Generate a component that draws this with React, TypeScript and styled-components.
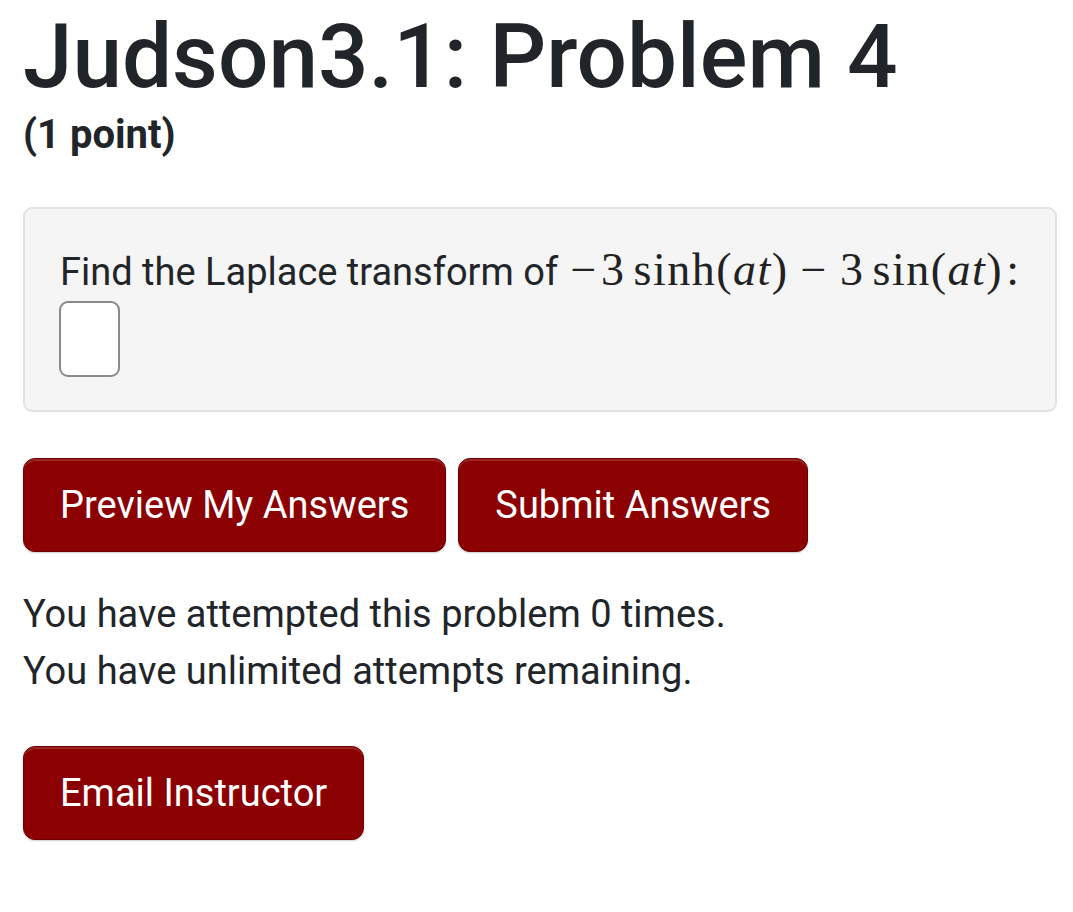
import styled, { createGlobalStyle } from 'styled-components';

const GlobalStyle = createGlobalStyle`
  html, body {
    margin: 0;
    padding: 0;
    background: #ffffff;
  }

  body {
    font-family: Roboto, "Liberation Sans", Arial, sans-serif;
    color: #212529;
  }
`;

const Page = styled.div`
  padding: 4px 16px 40px 23px;
`;

const Title = styled.h1`
  margin: 0;
  font-size: 89px;
  font-weight: 500;
  line-height: 1.2;
  color: #212529;
`;

const Points = styled.div`
  margin: 0 0 48px;
  font-size: 40px;
  font-weight: 700;
  line-height: 1.2;
`;

const ProblemPanel = styled.div`
  background: #f5f5f5;
  border: 2px solid #e2e2e2;
  border-radius: 9px;
  padding: 32px 35px 33px;
`;

const Question = styled.p`
  margin: 0;
  font-size: 38px;
  line-height: 57px;
  white-space: nowrap;
`;

const Math = styled.span`
  font-family: "Liberation Serif", "DejaVu Serif", serif;
  font-size: 46px;
  letter-spacing: 1.5px;
  margin-left: 3px;
  color: #222222;
`;

const MathVar = styled.i`
  font-style: italic;
`;

const Op = styled.span<{ $binary?: boolean }>`
  margin: ${({ $binary }) => ($binary ? '0 12px' : '0 3px 0 0')};
`;

const Thin = styled.span`
  display: inline-block;
  width: 8px;
`;

const Colon = styled.span`
  margin-left: 3px;
`;

const AnswerBox = styled.div`
  width: 61px;
  height: 76px;
  box-sizing: border-box;
  margin-left: -1px;
  background: #ffffff;
  border: 2px solid #8a8a8a;
  border-radius: 9px;
`;

const ButtonRow = styled.div`
  display: flex;
  gap: 12px;
  margin-top: 46px;
`;

const Button = styled.button`
  box-sizing: border-box;
  height: 94px;
  padding: 0 36px;
  border: 1px solid #6e0000;
  border-radius: 12px;
  background: #8b0000;
  color: #ffffff;
  font-family: Roboto, "Liberation Sans", Arial, sans-serif;
  font-size: 38px;
  box-shadow: inset 0 2px 0 rgba(255, 255, 255, 0.15), 0 1px 2px rgba(0, 0, 0, 0.2);
  cursor: pointer;
`;

const Attempts = styled.div`
  margin-top: 34px;
  font-size: 38px;
  line-height: 57px;
`;

const EmailRow = styled.div`
  margin-top: 46px;
`;

export default function App() {
  return (
    <>
      <GlobalStyle />
      <Page>
        <Title>Judson3.1: Problem 4</Title>
        <Points>(1 point)</Points>
        <ProblemPanel>
          <Question>
            Find the Laplace transform of{' '}
            <Math>
              <Op>−</Op>3<Thin />sinh(<MathVar>at</MathVar>)<Op $binary>−</Op>3<Thin />sin(<MathVar>at</MathVar>)
              <Colon>:</Colon>
            </Math>
          </Question>
          <AnswerBox />
        </ProblemPanel>
        <ButtonRow>
          <Button>Preview My Answers</Button>
          <Button>Submit Answers</Button>
        </ButtonRow>
        <Attempts>
          <div>You have attempted this problem 0 times.</div>
          <div>You have unlimited attempts remaining.</div>
        </Attempts>
        <EmailRow>
          <Button>Email Instructor</Button>
        </EmailRow>
      </Page>
    </>
  );
}
